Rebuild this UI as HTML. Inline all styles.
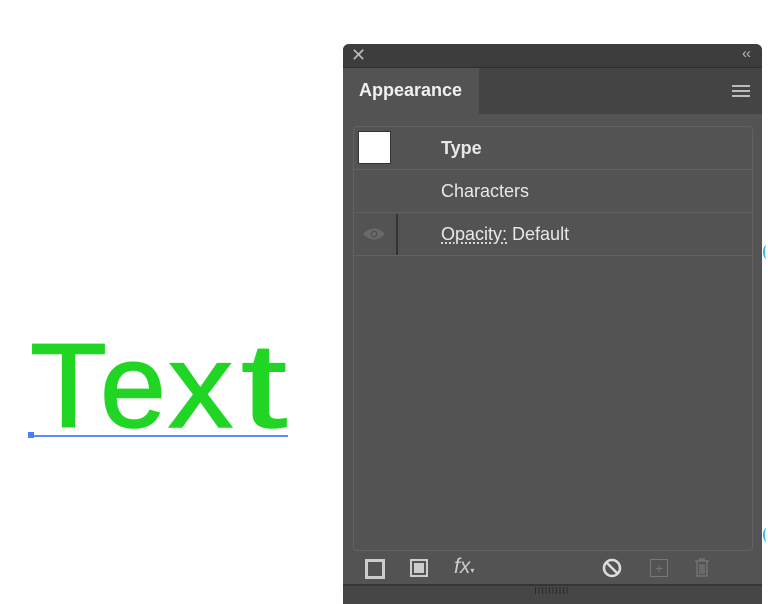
<!DOCTYPE html>
<html><head><style>
body{margin:0;width:768px;height:599px;background:#fff;position:relative;overflow:hidden;font-family:"Liberation Sans",sans-serif}
.base{position:absolute;left:30px;top:435px;width:258px;height:1.5px;background:#5b8cff}
.anc{position:absolute;left:28px;top:432px;width:6px;height:6px;background:#4a7cff}
.panel{position:absolute;left:343px;top:44px;width:419px;height:560px;background:#535353;border-radius:6px 6px 0 0;overflow:hidden}
.title{height:23px;background:#3d3d3d;position:relative;border-bottom:1px solid #2e2e2e}
.tabrow{height:46px;background:#444;position:relative}
.tab{position:absolute;left:0;top:0;width:136px;height:47px;background:#535353;color:#f0f0f0;font-weight:bold;font-size:18px;line-height:44px;padding-left:16px;box-sizing:border-box}
.box{position:absolute;left:10px;top:82px;width:398px;height:423px;border:1px solid #616161;border-radius:4px}
.row{height:42px;border-bottom:1px solid #616161;position:relative;color:#e8e8e8;font-size:18px;line-height:42px}
.row span{position:absolute;left:87px}
.icons{position:absolute;top:512px;left:0;width:419px;height:28px}
.bottom{position:absolute;left:0;top:540px;width:419px;height:20px;background:#464646;border-top:2px solid #353535}
</style></head><body>
<svg style="position:absolute;left:0;top:0" width="340" height="460" font-family="Liberation Sans" font-size="120" fill="#20d524" stroke="#20d524" stroke-width="1.5">
<text x="30" y="427" textLength="77" lengthAdjust="spacingAndGlyphs">T</text>
<text x="100" y="427" textLength="66" lengthAdjust="spacingAndGlyphs">e</text>
<text x="168" y="427" textLength="65" lengthAdjust="spacingAndGlyphs">x</text>
<text x="241" y="427" textLength="46" lengthAdjust="spacingAndGlyphs">t</text>
</svg>
<div class="base"></div><div class="anc"></div>
<div style="position:absolute;left:763px;top:245px;width:5px;height:14px;border-left:2px solid #39b8e8;border-radius:50%"></div>
<div style="position:absolute;left:763px;top:528px;width:5px;height:14px;border-left:2px solid #39b8e8;border-radius:50%"></div>
<div class="panel">
 <div class="title">
  <span style="position:absolute;left:8px;top:1px;color:#bbb;font-size:18px">✕</span>
  <span style="position:absolute;right:12px;top:1px;color:#bbb;font-size:15px;letter-spacing:-1px">‹‹</span>
 </div>
 <div class="tabrow"><div class="tab">Appearance</div>
  <div style="position:absolute;right:12px;top:17px;width:18px;height:2px;background:#bbb;box-shadow:0 5px 0 #bbb,0 10px 0 #bbb"></div>
 </div>
 <div class="box">
  <div class="row"><div style="position:absolute;left:4px;top:4px;width:31px;height:31px;background:#fff;border:1px solid #333"></div><span style="font-weight:bold">Type</span></div>
  <div class="row"><span>Characters</span></div>
  <div class="row"><svg style="position:absolute;left:8px;top:14px" width="24" height="14" viewBox="0 0 24 14"><path d="M1 7Q12-4 23 7Q12 18 1 7Z" fill="#6a6a6a"/><circle cx="12" cy="7" r="3.5" fill="#535353"/><circle cx="12" cy="7" r="2" fill="#6a6a6a"/></svg><div style="position:absolute;left:42px;top:1px;width:2px;height:41px;background:#333"></div><span><u style="text-decoration:underline dotted;text-underline-offset:3px">Opacity:</u> Default</span></div>
 </div>
 <div class="icons">
  <div style="position:absolute;left:22px;top:3px;width:14px;height:14px;border:3px solid #ccc"></div>
  <div style="position:absolute;left:67px;top:3px;width:14px;height:14px;border:2px solid #ccc;box-shadow:inset 0 0 0 2px #535353;background:#ccc"></div>
  <span style="position:absolute;left:111px;top:-1px;color:#ccc;font-style:italic;font-size:21px">fx<span style="font-size:8px;font-style:normal">▾</span></span>
  <svg style="position:absolute;left:259px;top:2px" width="20" height="20"><circle cx="10" cy="10" r="8" fill="none" stroke="#ddd" stroke-width="2.5"/><path d="M4 4L16 16" stroke="#ddd" stroke-width="2.5"/></svg>
  <div style="position:absolute;left:307px;top:3px;width:16px;height:16px;border:1px solid #777;color:#777;font-size:14px;line-height:16px;text-align:center">+</div>
  <svg style="position:absolute;left:350px;top:1px" width="18" height="21"><path d="M2 4H16M7 4V2H11V4M4 4V19H14V4M7 7V17M9 7V17M11 7V17" fill="none" stroke="#777" stroke-width="1.3"/></svg>
 </div>
 <div class="bottom"><div style="position:absolute;left:192px;top:1px;width:34px;height:7px;background:repeating-linear-gradient(90deg,#2a2a2a 0 1px,transparent 1px 3.5px)"></div></div>
</div>
</body></html>
